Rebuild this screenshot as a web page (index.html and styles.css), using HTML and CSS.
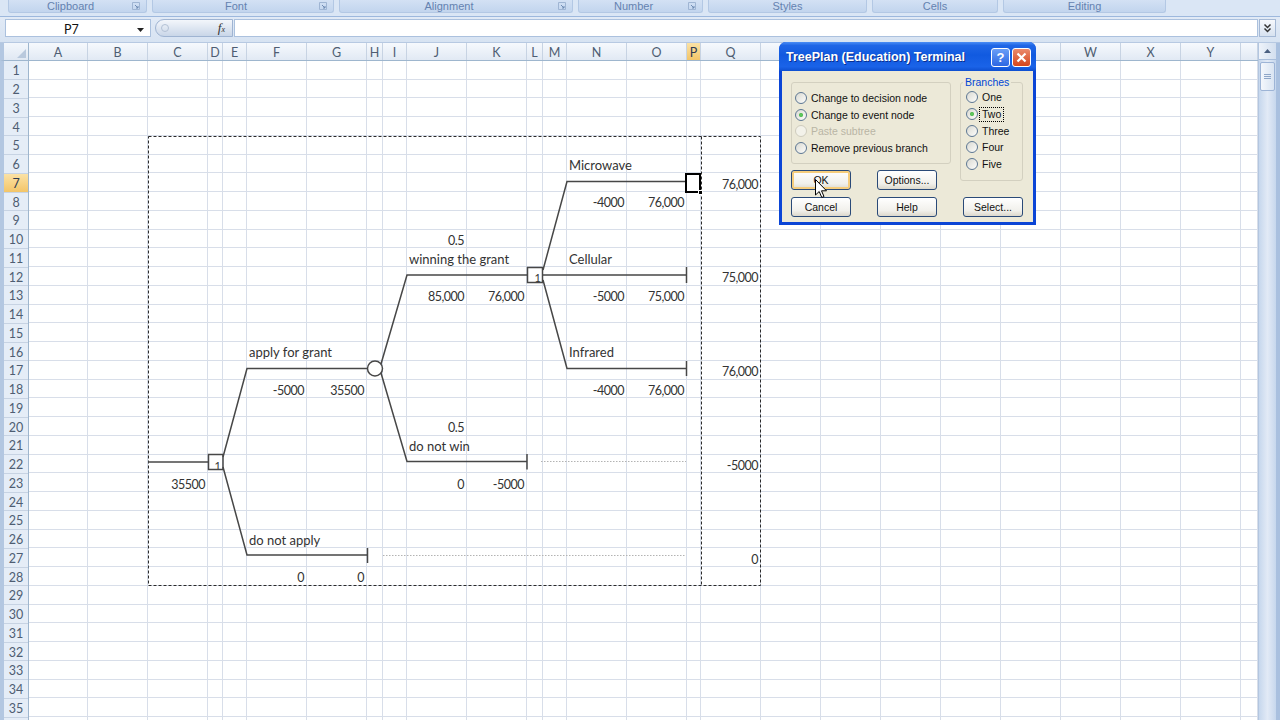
FILE: index.html
```html
<!DOCTYPE html>
<html>
<head>
<meta charset="utf-8">
<link rel="stylesheet" href="styles.css">
</head>
<body>
<div class="app">
  <div class="ribbon">
    <div class="grp g-clip"><span>Clipboard</span><svg class="launch" width="8" height="8" viewBox="0 0 8 8"><path d="M0.5 0.5H7.5V7.5H0.5Z" fill="none" stroke="#9fb5d3"/><path d="M3 3L6 6M6 4V6H4" fill="none" stroke="#6f8bb3"/></svg></div>
    <div class="grp g-font"><span>Font</span><svg class="launch" width="8" height="8" viewBox="0 0 8 8"><path d="M0.5 0.5H7.5V7.5H0.5Z" fill="none" stroke="#9fb5d3"/><path d="M3 3L6 6M6 4V6H4" fill="none" stroke="#6f8bb3"/></svg></div>
    <div class="grp g-align"><span>Alignment</span><svg class="launch" width="8" height="8" viewBox="0 0 8 8"><path d="M0.5 0.5H7.5V7.5H0.5Z" fill="none" stroke="#9fb5d3"/><path d="M3 3L6 6M6 4V6H4" fill="none" stroke="#6f8bb3"/></svg></div>
    <div class="grp g-num"><span>Number</span><svg class="launch" width="8" height="8" viewBox="0 0 8 8"><path d="M0.5 0.5H7.5V7.5H0.5Z" fill="none" stroke="#9fb5d3"/><path d="M3 3L6 6M6 4V6H4" fill="none" stroke="#6f8bb3"/></svg></div>
    <div class="grp nl g-sty"><span>Styles</span></div>
    <div class="grp nl g-cells"><span>Cells</span></div>
    <div class="grp nl g-edit"><span>Editing</span></div>
  </div>

  <div class="fbar">
    <div class="namebox"><span class="nb-text">P7</span><svg width="7" height="4" viewBox="0 0 7 4"><path d="M0 0H7L3.5 4Z" fill="#222"/></svg></div>
    <div class="fxpill">
      <svg width="10" height="10" viewBox="0 0 10 10"><circle cx="5" cy="5" r="3.5" fill="none" stroke="#b3c1d5"/></svg>
      <span class="fx">f<small>x</small></span>
    </div>
    <div class="finput"></div>
    <div class="fexpand"><svg width="9" height="10" viewBox="0 0 9 10"><path d="M1.5 1.5L4.5 4.5L7.5 1.5M1.5 5.5L4.5 8.5L7.5 5.5" fill="none" stroke="#333" stroke-width="1.5"/></svg></div>
  </div>

  <div class="sheetwrap">
    <div class="sheet">
      <div class="corner"><svg width="9" height="9" viewBox="0 0 9 9"><path d="M9 0V9H0Z" fill="#b9c9dd"/></svg></div>
      <div class="colhdrs">
        <div class="ch w59">A</div><div class="ch w60">B</div><div class="ch w60">C</div><div class="ch w15">D</div><div class="ch w24">E</div><div class="ch w60">F</div><div class="ch w60">G</div><div class="ch w16">H</div><div class="ch w24">I</div><div class="ch w60">J</div><div class="ch w60">K</div><div class="ch w16">L</div><div class="ch w24">M</div><div class="ch w60">N</div><div class="ch w60">O</div><div class="ch w14 sel">P</div><div class="ch w60">Q</div><div class="ch w60"></div><div class="ch w60"></div><div class="ch w60"></div><div class="ch w60"></div><div class="ch w60"></div><div class="ch w60">W</div><div class="ch w60">X</div><div class="ch w60">Y</div><div class="ch w17"></div>
      </div>
      <div class="rowhdrs">
        <div class="rh">1</div><div class="rh">2</div><div class="rh">3</div><div class="rh">4</div><div class="rh">5</div><div class="rh">6</div><div class="rh sel">7</div><div class="rh">8</div><div class="rh">9</div><div class="rh">10</div><div class="rh">11</div><div class="rh">12</div><div class="rh">13</div><div class="rh">14</div><div class="rh">15</div><div class="rh">16</div><div class="rh">17</div><div class="rh">18</div><div class="rh">19</div><div class="rh">20</div><div class="rh">21</div><div class="rh">22</div><div class="rh">23</div><div class="rh">24</div><div class="rh">25</div><div class="rh">26</div><div class="rh">27</div><div class="rh">28</div><div class="rh">29</div><div class="rh">30</div><div class="rh">31</div><div class="rh">32</div><div class="rh">33</div><div class="rh">34</div><div class="rh">35</div><div class="rh"></div>
      </div>
      <div class="body">
        <div class="col w59"></div>
        <div class="col w60"></div>
        <div class="col w60 g"><div class="t rt r23">35500</div></div>
        <div class="col w15 g"><div class="t rt one r22">1</div></div>
        <div class="col w24"></div>
        <div class="col w60 g">
          <div class="t r16">apply for grant</div>
          <div class="t rt r18">-5000</div>
          <div class="t r26">do not apply</div>
          <div class="t rt r28">0</div>
        </div>
        <div class="col w60 g">
          <div class="t rt r18">35500</div>
          <div class="t rt r28">0</div>
        </div>
        <div class="col w16"></div>
        <div class="col w24"></div>
        <div class="col w60 g">
          <div class="t rt r10">0.5</div>
          <div class="t r11">winning the grant</div>
          <div class="t rt r13">85,000</div>
          <div class="t rt r20">0.5</div>
          <div class="t r21">do not win</div>
          <div class="t rt r23">0</div>
        </div>
        <div class="col w60 g">
          <div class="t rt r13">76,000</div>
          <div class="t rt r23">-5000</div>
        </div>
        <div class="col w16 g"><div class="t rt one r12">1</div></div>
        <div class="col w24"></div>
        <div class="col w60 g">
          <div class="t r6">Microwave</div>
          <div class="t rt r8">-4000</div>
          <div class="t r11">Cellular</div>
          <div class="t rt r13">-5000</div>
          <div class="t r16">Infrared</div>
          <div class="t rt r18">-4000</div>
        </div>
        <div class="col w60 g">
          <div class="t rt r8">76,000</div>
          <div class="t rt r13">75,000</div>
          <div class="t rt r18">76,000</div>
        </div>
        <div class="col w14"></div>
        <div class="col w60 g">
          <div class="t rt r7">76,000</div>
          <div class="t rt r12">75,000</div>
          <div class="t rt r17">76,000</div>
          <div class="t rt r22">-5000</div>
          <div class="t rt r27">0</div>
        </div>
        <div class="col w60"></div><div class="col w60"></div><div class="col w60"></div><div class="col w60"></div><div class="col w60"></div><div class="col w60"></div><div class="col w60"></div><div class="col w60"></div>
        <div class="col w17"></div>
      </div>
    </div>
    <div class="vscroll">
      <div class="vs-up"><svg width="7" height="4" viewBox="0 0 7 4"><path d="M0 4H7L3.5 0Z" fill="#4a5f80"/></svg></div>
      <div class="vs-thumb"><svg width="7" height="7" viewBox="0 0 7 7"><path d="M0 1.5H7M0 3.5H7M0 5.5H7" stroke="#8ea6c8"/></svg></div>
    </div>
  </div>

  <svg class="tree" width="1280" height="720" viewBox="0 0 1280 720">
    <g fill="none" stroke="#2a2a2a" stroke-width="1" stroke-dasharray="3 2">
      <rect x="148.5" y="136.5" width="612" height="449"/>
      <path d="M701.5 136.5V585.5"/>
    </g>
    <g fill="none" stroke="#b3b3b3" stroke-width="1" stroke-dasharray="1.5 1.5">
      <path d="M541 461.5H686"/>
      <path d="M383 555.5H686"/>
    </g>
    <g fill="none" stroke="#474747" stroke-width="1.5">
      <path d="M148 462H208.5"/>
      <rect x="208.5" y="454.5" width="14.5" height="15"/>
      <path d="M223 457L247 368.5H367.5"/>
      <path d="M223 467L247 555H367.5M367.5 548V563"/>
      <circle cx="375" cy="368.5" r="7.5"/>
      <path d="M381 364L407 275H527.5"/>
      <path d="M381 373L407 461.5H527M527 454V469.5"/>
      <rect x="527.5" y="267.5" width="15" height="15"/>
      <path d="M543 270L567 181.5H686"/>
      <path d="M543 275H686.5M686.5 267V283"/>
      <path d="M543 280L567 368.5H686.5M686.5 361V376"/>
    </g>
    <rect x="686" y="174" width="14" height="18" fill="none" stroke="#000" stroke-width="2"/>
    <rect x="698.5" y="190.5" width="4" height="4" fill="#000" stroke="#fff" stroke-width="1"/>
  </svg>

  <div class="dialog">
    <div class="titlebar">
      <span class="title">TreePlan (Education) Terminal</span>
      <span class="tb-btn tb-help">?</span>
      <span class="tb-btn tb-close"><svg width="11" height="11" viewBox="0 0 11 11"><path d="M1.5 1.5L9.5 9.5M9.5 1.5L1.5 9.5" stroke="#fff" stroke-width="2.2"/></svg></span>
    </div>
    <div class="dbody">
      <div class="gbox opts">
        <div class="opt"><i class="radio"></i>Change to decision node</div>
        <div class="opt"><i class="radio on"></i>Change to event node</div>
        <div class="opt dis"><i class="radio"></i>Paste subtree</div>
        <div class="opt"><i class="radio"></i>Remove previous branch</div>
      </div>
      <div class="gbox branches">
        <div class="legend">Branches</div>
        <div class="opt"><i class="radio"></i>One</div>
        <div class="opt"><i class="radio on"></i><span class="focus">Two</span></div>
        <div class="opt"><i class="radio"></i>Three</div>
        <div class="opt"><i class="radio"></i>Four</div>
        <div class="opt"><i class="radio"></i>Five</div>
      </div>
      <div class="btnrow r-a">
        <div class="btn hot">OK</div>
        <div class="btn">Options...</div>
      </div>
      <div class="btnrow r-b">
        <div class="btn">Cancel</div>
        <div class="btn">Help</div>
      </div>
      <div class="btn sel">Select...</div>
    </div>
  </div>

  <svg class="cursor" width="13" height="20" viewBox="0 0 13 20"><path d="M0.5 0.5V16L4.2 12.5L6.8 18.5L9 17.5L6.5 11.8H11.5Z" fill="#fff" stroke="#000" stroke-width="1" stroke-linejoin="round"/></svg>
</div>
</body>
</html>
```

FILE: styles.css
```css
html, body {
  margin: 0;
  padding: 0;
}
body {
  width: 1280px;
  height: 720px;
  overflow: hidden;
  font-family: Lato, "Liberation Sans", sans-serif;
}
.app {
  position: relative;
  width: 1280px;
  height: 720px;
  overflow: hidden;
  background: #fff;
}

/* ribbon */
.ribbon {
  height: 17px;
  box-sizing: border-box;
  background: #dae6f5;
  border-bottom: 1px solid #9db8dd;
  display: flex;
  gap: 5px;
  padding-left: 8px;
}
.grp {
  height: 13px;
  box-sizing: border-box;
  background: linear-gradient(#d3e1f4, #c2d5ee);
  border: 1px solid #b3c8e4;
  border-top: 0;
  border-radius: 0 0 3px 3px;
  display: grid;
  grid-template-columns: 1fr 14px;
  align-items: center;
  font-family: "Liberation Sans", sans-serif;
  font-size: 11px;
  color: #6482b0;
}
.grp.nl { grid-template-columns: 1fr; }
.grp span { text-align: center; line-height: 12px; }
.launch { display: block; }
.g-clip { width: 139px; }
.g-font { width: 182px; }
.g-align { width: 234px; }
.g-num { width: 125px; }
.g-sty { width: 159px; }
.g-cells { width: 126px; }
.g-edit { width: 163px; }

/* formula bar */
.fbar {
  height: 26px;
  box-sizing: border-box;
  display: flex;
  padding: 2px 4px 5px 5px;
  background: linear-gradient(#e1eaf6, #d7e3f2);
  border-bottom: 1px solid #b7c9e2;
}
.namebox {
  width: 146px;
  box-sizing: border-box;
  background: #fff;
  border: 1px solid #abc1de;
  display: grid;
  grid-template-columns: 1fr 13px;
  align-items: center;
  font-size: 12.5px;
  line-height: 19px;
  color: #111;
}
.nb-text { text-align: center; }
.fxpill {
  margin-left: 4px;
  width: 78px;
  box-sizing: border-box;
  border: 1px solid #9fb4d2;
  border-radius: 10px 0 0 10px;
  background: linear-gradient(#f3f6fb, #c9d6e8);
  display: flex;
  align-items: center;
  justify-content: space-between;
  padding: 0 7px 0 4px;
}
.fx {
  font-family: "Liberation Serif", serif;
  font-style: italic;
  font-size: 13px;
  color: #333;
}
.fx small { font-size: 8px; }
.finput {
  flex: 1;
  margin-left: 1px;
  box-sizing: border-box;
  background: #fff;
  border: 1px solid #abc1de;
}
.fexpand {
  width: 17px;
  margin-left: 1px;
  box-sizing: border-box;
  border: 1px solid #a5b9d5;
  background: linear-gradient(#f6f8fc, #d7e2f0);
  display: flex;
  align-items: center;
  justify-content: center;
}

/* sheet */
.sheetwrap {
  display: flex;
  height: 677px;
}
.sheet {
  width: 1258px;
  display: grid;
  grid-template-columns: 29px 1229px;
  grid-template-rows: 18.3px 1fr;
  overflow: hidden;
}
.corner {
  box-sizing: border-box;
  background: linear-gradient(#f3f7fc, #e0e8f3);
  border-left: 4px solid #b3c7e1;
  border-right: 1px solid #9eb6ce;
  border-bottom: 1px solid #9eb6ce;
  display: flex;
  align-items: flex-end;
  justify-content: flex-end;
  padding: 0 2px 2px 0;
}
.colhdrs {
  display: flex;
  box-sizing: border-box;
  background: linear-gradient(#f6f9fd, #e1e9f4);
  border-bottom: 1px solid #9eb6ce;
}
.ch {
  flex: none;
  box-sizing: border-box;
  border-right: 1px solid #c7d3e3;
  text-align: center;
  font-size: 12.5px;
  line-height: 19px;
  color: #4e5d72;
  overflow: hidden;
}
.ch.sel {
  background: linear-gradient(#fbe2a6, #f3c568);
  color: #2c3a52;
}
.rowhdrs {
  display: flex;
  flex-direction: column;
  box-sizing: border-box;
  background: #e5edf7;
  border-left: 4px solid #b3c7e1;
  border-right: 1px solid #9eb6ce;
}
.rh {
  flex: none;
  height: 18.75px;
  box-sizing: border-box;
  border-bottom: 1px solid #c7d3e3;
  text-align: center;
  font-size: 12.5px;
  line-height: 19.5px;
  color: #4e5d72;
}
.rh.sel {
  background: linear-gradient(#fbe2a6, #f3c568);
  color: #2c3a52;
}
.body {
  display: flex;
  background: repeating-linear-gradient(to bottom, #fff 0, #fff 17.75px, #d8dee9 17.75px, #d8dee9 18.75px);
}
.col {
  flex: none;
  box-sizing: border-box;
  border-right: 1px solid #d8dee9;
}
.col.g {
  display: grid;
  grid-template-columns: minmax(0, 1fr);
  grid-template-rows: repeat(36, 18.75px);
}
.w59 { width: 59px; }
.w60 { width: 60px; }
.w15 { width: 15px; }
.w24 { width: 24px; }
.w16 { width: 16px; }
.w14 { width: 14px; }
.w17 { width: 17px; }

.t {
  min-width: 0;
  align-self: end;
  white-space: nowrap;
  font-size: 13px;
  line-height: 17px;
  color: #333;
  padding: 0 2px;
}
.t.rt {
  text-align: right;
  font-size: 12.5px;
  letter-spacing: -0.5px;
}
.t.one { font-size: 11px; padding-right: 1px; letter-spacing: 0; }
.r6 { grid-row: 6; }
.r7 { grid-row: 7; }
.r8 { grid-row: 8; }
.r10 { grid-row: 10; }
.r11 { grid-row: 11; }
.r12 { grid-row: 12; }
.r13 { grid-row: 13; }
.r16 { grid-row: 16; }
.r17 { grid-row: 17; }
.r18 { grid-row: 18; }
.r20 { grid-row: 20; }
.r21 { grid-row: 21; }
.r22 { grid-row: 22; }
.r23 { grid-row: 23; }
.r26 { grid-row: 26; }
.r27 { grid-row: 27; }
.r28 { grid-row: 28; }

/* vertical scrollbar */
.vscroll {
  width: 22px;
  box-sizing: border-box;
  border-left: 1px solid #b3c6e0;
  border-right: 4px solid #a9c0df;
  background: linear-gradient(to right, #c6d7ed, #e2eaf6 50%, #c6d7ed);
  display: flex;
  flex-direction: column;
}
.vs-up {
  height: 17px;
  box-sizing: border-box;
  background: linear-gradient(to right, #eef3fa, #d3dfef);
  border-bottom: 1px solid #a9bedb;
  display: flex;
  align-items: center;
  justify-content: center;
}
.vs-thumb {
  height: 29px;
  margin: 2px 1px 0;
  box-sizing: border-box;
  border: 1px solid #9db4d6;
  border-radius: 2px;
  background: linear-gradient(to right, #f4f7fc, #d9e4f2);
  display: flex;
  align-items: center;
  justify-content: center;
}

/* tree overlay */
.tree {
  position: absolute;
  left: 0;
  top: 0;
  pointer-events: none;
}

/* dialog */
.dialog {
  position: absolute;
  left: 779px;
  top: 42px;
  width: 257px;
  height: 183px;
  box-sizing: border-box;
  padding: 0 3px 3px;
  background: #0b45d6;
  border-radius: 7px 7px 0 0;
  font-family: "Liberation Sans", sans-serif;
  font-size: 10.5px;
  color: #111;
  display: flex;
  flex-direction: column;
}
.titlebar {
  height: 29px;
  margin: 0 -3px;
  padding: 1px 5px 0 7px;
  box-sizing: border-box;
  border-radius: 7px 7px 0 0;
  background: linear-gradient(#4a8df5, #1f66e6 12%, #115ae0 45%, #1a63e8 85%, #0e4fd0);
  display: flex;
  align-items: center;
  gap: 2px;
}
.title {
  flex: 1;
  color: #fff;
  font-weight: bold;
  font-size: 12.5px;
  text-shadow: 1px 1px 0 #0a2f90;
}
.tb-btn {
  width: 19px;
  height: 19px;
  box-sizing: border-box;
  border: 1px solid #fff;
  border-radius: 3px;
  display: flex;
  align-items: center;
  justify-content: center;
  color: #fff;
  font-weight: bold;
  font-size: 13px;
}
.tb-help { background: linear-gradient(#6a9ef7, #2c67e3); }
.tb-close { background: linear-gradient(#ea8a6c, #d6461c); }
.dbody {
  flex: 1;
  background: #ece9d8;
  display: grid;
  grid-template-columns: 160px 63px;
  grid-template-rows: 92px 27px 20px;
  column-gap: 9px;
  padding: 7px 0 0 9px;
  align-items: start;
}
.gbox {
  box-sizing: border-box;
  border: 1px solid #d3d0c0;
  border-radius: 3px;
}
.opts {
  grid-column: 1;
  grid-row: 1;
  margin-top: 4px;
  height: 82px;
  padding: 6.7px 0 0 3px;
}
.branches {
  grid-column: 2;
  grid-row: 1 / 3;
  margin-top: 4px;
  height: 99px;
  padding: 0 0 0 5px;
}
.legend {
  width: fit-content;
  margin: -7px 0 0 -3px;
  padding: 0 2px;
  height: 13px;
  line-height: 13px;
  background: #ece9d8;
  color: #0046d5;
}
.opt {
  height: 16.7px;
  display: flex;
  align-items: center;
  white-space: nowrap;
}
.opt.dis { color: #b9b5a5; }
.radio {
  flex: none;
  width: 12px;
  height: 12px;
  box-sizing: border-box;
  border-radius: 50%;
  border: 1px solid #5d7793;
  background: linear-gradient(135deg, #d9d9d2, #fdfdfb);
  margin-right: 4px;
  display: flex;
  align-items: center;
  justify-content: center;
}
.opt.dis .radio { border-color: #cfccbd; background: #f3f2ea; }
.radio.on::after {
  content: "";
  width: 4px;
  height: 4px;
  border-radius: 50%;
  background: radial-gradient(#6fd36f, #21a121);
}
.focus {
  outline: 1px dotted #000;
  padding: 0 2px;
  margin-left: -2px;
  line-height: 13px;
}
.btnrow {
  grid-column: 1;
  display: flex;
  gap: 26px;
}
.r-a { grid-row: 2; }
.r-b { grid-row: 3; }
.btn {
  width: 60px;
  height: 20px;
  box-sizing: border-box;
  border: 1px solid #2a4a78;
  border-radius: 3px;
  background: linear-gradient(#ffffff, #f1f0eb 70%, #dcd8cc);
  display: flex;
  align-items: center;
  justify-content: center;
  font-size: 10.5px;
}
.btn.hot { box-shadow: inset 0 0 0 2px #f6cd7c; }
.btn.sel {
  grid-column: 2;
  grid-row: 3;
  margin-left: 3px;
}

.cursor {
  position: absolute;
  left: 814.5px;
  top: 178.5px;
}
```
